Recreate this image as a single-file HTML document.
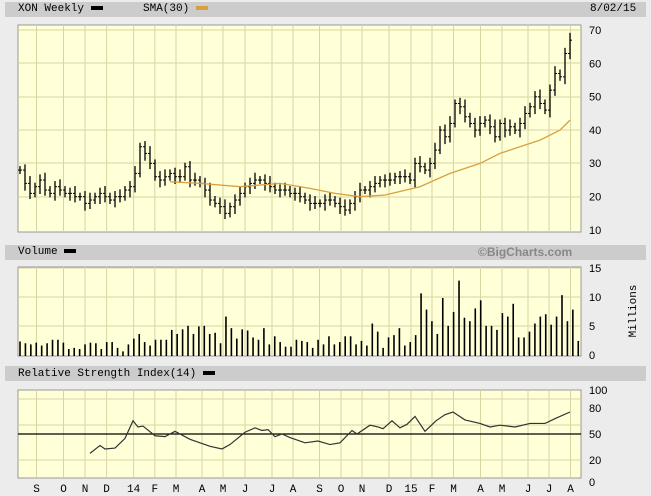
<!DOCTYPE html>
<html><head><meta charset="utf-8"><style>
body{margin:0;width:651px;height:496px;background:#ececec;font-family:"Liberation Mono",monospace;font-size:11px;overflow:hidden;position:relative}
.bar{position:absolute;left:5px;width:641px;background:#cccccc;height:15px}
.t{position:absolute;color:#000;white-space:nowrap;font-size:11px}
svg{position:absolute;left:0;top:0}
</style></head><body>
<div class="bar" style="top:2px"></div>
<div class="bar" style="top:245px"></div>
<div class="bar" style="top:366px"></div>
<div class="t" style="left:18px;top:3px">XON Weekly <span style="display:inline-block;width:12px;height:4px;background:#000;vertical-align:middle"></span></div>
<div class="t" style="left:143px;top:3px">SMA(30) <span style="display:inline-block;width:12px;height:4px;background:#d9a040;vertical-align:middle"></span></div>
<div class="t" style="left:590px;top:3px">8/02/15</div>
<div class="t" style="left:18px;top:246px">Volume <span style="display:inline-block;width:12px;height:4px;background:#000;vertical-align:middle"></span></div>
<div class="t" style="left:478px;top:245px;color:#888;font-family:'Liberation Sans',sans-serif;font-weight:bold;font-size:12px">©BigCharts.com</div>
<div class="t" style="left:18px;top:368px">Relative Strength Index(14) <span style="display:inline-block;width:12px;height:4px;background:#000;vertical-align:middle"></span></div>
<svg id="s" width="651" height="496" xmlns="http://www.w3.org/2000/svg" font-family="Liberation Sans, sans-serif" font-size="11"></svg>
<script>
var s=document.getElementById('s'),h='';
var gx=[36.5,63.5,85,106.6,133.6,154.8,176,202,223,245,272,293,319.5,341,362,389,411,432,453.5,480.5,502,528,549,570.5];
function panel(y0,y1,hy){h+='<rect x="18" y="'+y0+'" width="563" height="'+(y1-y0)+'" fill="#ffffd8" stroke="#999" />';
gx.forEach(function(x){h+='<line x1="'+x+'" y1="'+y0+'" x2="'+x+'" y2="'+y1+'" stroke="#d8d6a0"/>'});
hy.forEach(function(y){h+='<line x1="18" y1="'+y+'" x2="581" y2="'+y+'" stroke="#d8d6a0"/>'});}
// price
panel(25,232,[30,63,97,130,163,197]);
[70,60,50,40,30,20,10].forEach(function(v,i){h+='<text x="589" y="'+(34+i*33.3)+'">'+v+'</text>'});
// volume
panel(267,356,[268,297,326]);
[[15,272],[10,301],[5,330],[0,359]].forEach(function(a){h+='<text x="589" y="'+a[1]+'">'+a[0]+'</text>'});
h+='<text transform="translate(636,311) rotate(-90)" text-anchor="middle" font-family="Liberation Mono,monospace">Millions</text>';
// rsi
panel(390,478,[399,425,434,460]);
[[100,394],[80,412],[50,438],[20,464],[0,486]].forEach(function(a){h+='<text x="589" y="'+a[1]+'">'+a[0]+'</text>'});
h+='<line x1="18" y1="434" x2="581" y2="434" stroke="#000" stroke-width="1.3"/>';
var lab=['S','O','N','D','14','F','M','A','M','J','J','A','S','O','N','D','15','F','M','A','M','J','J','A'];
lab.forEach(function(l,i){h+='<text x="'+gx[i]+'" y="492" text-anchor="middle" font-family="Liberation Mono,monospace">'+l+'</text>'});
// price pts
var P=[[20,28],[25,24],[30,21],[35,23],[40,25],[45,22],[50,21],[55,23],[60,22],[65,21],[70,21],[75,20],[80,20],[85,18],[90,19],[95,20],[100,21],[105,20],[110,19],[115,20],[120,20],[125,22],[130,23],[135,27],[140,35],[145,33],[150,30],[155,26],[160,25],[165,26],[170,27],[175,26],[180,26],[185,29],[190,25],[195,25],[200,24],[205,22],[210,19],[215,18],[220,17],[225,15],[230,17],[235,19],[240,21],[245,23],[250,24],[255,25],[260,25],[265,24],[270,23],[275,22],[280,22],[285,22],[290,21],[295,21],[300,20],[305,19],[310,18],[315,18],[320,18],[325,19],[330,19],[335,18],[340,17],[345,16],[350,18],[355,20],[360,22],[365,22],[370,23],[375,24],[380,25],[385,25],[390,25],[395,26],[400,26],[405,26],[410,25],[415,30],[420,29],[425,28],[430,30],[435,34],[440,40],[445,38],[450,42],[455,48],[460,47],[465,44],[470,42],[475,40],[480,42],[485,43],[490,41],[495,38],[500,42],[505,40],[510,41],[515,40],[520,42],[525,45],[530,47],[535,50],[540,48],[545,46],[550,52],[555,57],[560,56],[565,63],[570,67]];
function py(p){return 230-(p-10)*3.33}
var prev=P[0][1];
P.forEach(function(a,i){var o=prev,c=a[1],hi=Math.max(o,c)+1.2+((i*7)%3)*0.5,lo=Math.min(o,c)-1.2-((i*5)%3)*0.5;
h+='<line x1="'+a[0]+'" y1="'+py(hi)+'" x2="'+a[0]+'" y2="'+py(lo)+'" stroke="#000" stroke-width="1.3"/>';
h+='<line x1="'+(a[0]-2)+'" y1="'+py(o)+'" x2="'+a[0]+'" y2="'+py(o)+'" stroke="#000"/>';
h+='<line x1="'+a[0]+'" y1="'+py(c)+'" x2="'+(a[0]+2)+'" y2="'+py(c)+'" stroke="#000"/>';prev=c;});
var S=[[170,24.5],[200,24],[240,23],[280,24],[310,22.5],[335,21],[360,20],[385,20.5],[420,23],[450,27],[480,30],[500,33],[540,37],[560,40],[570,43]];
h+='<polyline fill="none" stroke="#d9a040" stroke-width="1.3" points="'+S.map(function(a){return a[0]+','+py(a[1])}).join(' ')+'"/>';
// volume
var V=[2.5,2.2,2,2.3,1.8,2.2,2.8,2.8,2.3,1.2,1.4,1.2,2,2.3,2.2,1.2,2.4,2.4,1.4,0.8,2,3,3.8,2.4,1.8,2.8,2.8,2.8,4.5,3.8,4.6,5.2,3.8,5.1,5.2,3.8,4,2.2,6.8,4.8,3,4.6,4.4,3.2,2.8,4.8,2,3.4,2.4,1.6,1.6,2.8,2.6,2.4,1.4,2.8,2,3.4,2,2.4,3.4,3.4,2,2.6,1.8,5.6,4.2,1.4,3.2,3.6,4.8,1.8,2.4,3.6,10.8,8,6,3.8,10,5.2,7.6,13,6.6,6,8.2,9.6,5.2,5.2,4.5,7.4,6.8,9,3.2,3.2,4.2,5.6,6.8,7.2,5.4,6.8,10.5,6,8,2.6];
V.forEach(function(v,i){var x=20+i*5.42;h+='<line x1="'+x+'" y1="356" x2="'+x+'" y2="'+(356-v*5.8)+'" stroke="#000" stroke-width="1.6"/>'});
var R=[[90,28],[100,37],[105,33],[115,34],[125,45],[133,65],[138,58],[143,59],[155,48],[165,47],[175,53],[190,44],[210,36],[222,33],[230,38],[245,52],[255,57],[262,54],[268,55],[275,47],[282,50],[290,46],[305,40],[318,42],[330,38],[340,40],[352,54],[357,50],[370,60],[378,58],[383,56],[392,65],[400,57],[407,61],[415,70],[425,53],[436,65],[445,72],[453,75],[465,66],[480,62],[490,58],[500,60],[515,58],[530,62],[545,62],[556,68],[570,75]];
h+='<polyline fill="none" stroke="#333" stroke-width="1.2" points="'+R.map(function(a){return a[0]+','+(478-a[1]*0.88)}).join(' ')+'"/>';
s.innerHTML=h;
</script>
</body></html>
